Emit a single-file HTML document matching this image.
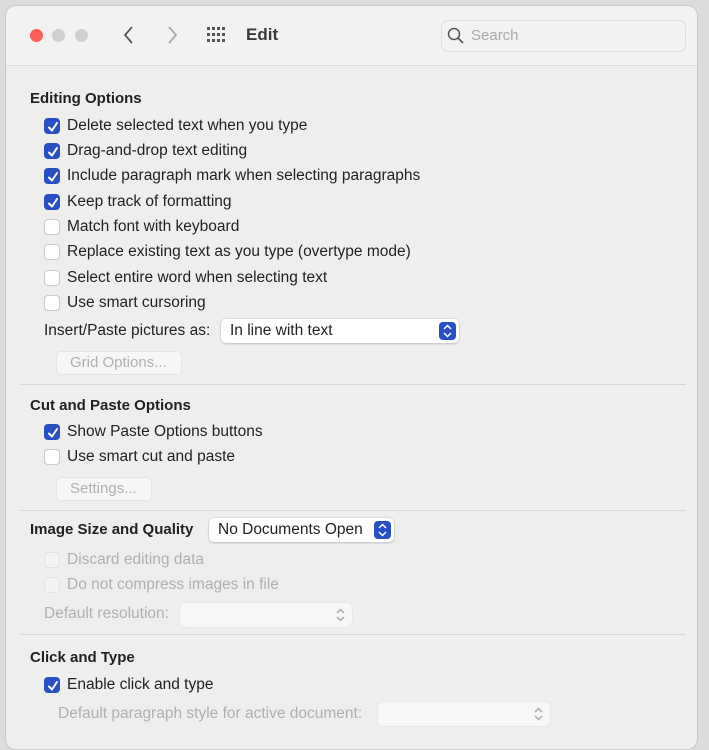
<!DOCTYPE html>
<html><head><meta charset="utf-8"><style>
*{box-sizing:border-box;margin:0;padding:0}
body{width:709px;height:747px;background:#dcdcdc;font-family:"Liberation Sans",sans-serif;position:relative;overflow:hidden;color:#1f1f1f}
.win{position:absolute;left:5px;top:5px;width:693px;height:745px;background:#eeeeec;border-radius:11px;border:1px solid #c8c8c8;overflow:hidden}
.tb{position:absolute;left:0;top:0;right:0;height:60px;background:#f2f2f0;border-bottom:1px solid #dcdcda}
.dot{position:absolute;top:23px;width:13px;height:13px;border-radius:50%}
.a{position:absolute;white-space:nowrap}
.t{font-size:15.5px;color:#222}
.h{font-size:15px;font-weight:bold;color:#222}
.cb{position:absolute;width:16px;height:16px;border-radius:4px;background:#fff;border:1px solid #c9c9c9}
.cb.on{background:#2650c4;border-color:#2650c4}
.cb svg{position:absolute;left:1px;top:1px}
.cb.dis{background:#f2f2f0;border-color:#e2e2e0}
.sep{position:absolute;left:15px;width:665px;height:1px;background:#d6d6d4}
.btn{position:absolute;height:24px;border-radius:5px;background:#f6f6f5;border:1px solid #e3e3e1;color:#b0b0b0;font-size:15px;padding-left:13px;line-height:22px}
.pop{position:absolute;height:24px;border-radius:5px;background:#fff;box-shadow:0 0 0 .5px #ccc,0 1px 2px rgba(0,0,0,.2);font-size:15.5px;line-height:24px;padding-left:9px;color:#222}
.pop .s{position:absolute;right:3px;top:3px;width:17px;height:18px;border-radius:4px;background:#2650c4}
.pop .s svg,.pop .gs{position:absolute;left:3px;top:2px}
.pop.dis{background:#f7f7f6;box-shadow:0 0 0 .5px #e0e0de}
.g{color:#b0b0b0}
</style></head><body>
<svg width="0" height="0" style="position:absolute"><defs><symbol id="ck" viewBox="0 0 14 14"><path d="M3 7.5 L6 10.5 L11 3" stroke="#fff" stroke-width="2" fill="none" stroke-linecap="round" stroke-linejoin="round"/></symbol><symbol id="ud" viewBox="0 0 11 14"><path d="M2 5 L5.5 1.5 L9 5 M2 9 L5.5 12.5 L9 9" stroke="currentColor" stroke-width="1.5" fill="none"/></symbol></defs></svg>
<div class="win">
<div class="tb">
<div class="dot" style="left:24px;background:#fe5f57"></div>
<div class="dot" style="left:46px;background:#d0d0ce"></div>
<div class="dot" style="left:69px;background:#d0d0ce"></div>
<svg class="a" style="left:117px;top:19px" width="12" height="20"><path d="M9 2 L2 10 L9 18" stroke="#555" stroke-width="1.8" fill="none"/></svg>
<svg class="a" style="left:160px;top:19px" width="12" height="20"><path d="M3 2 L10 10 L3 18" stroke="#aaa" stroke-width="1.8" fill="none"/></svg>
<svg class="a" style="left:201px;top:21px" width="20" height="16" fill="#555"><rect x="0" y="0" width="3" height="3"/><rect x="5" y="0" width="3" height="3"/><rect x="10" y="0" width="3" height="3"/><rect x="15" y="0" width="3" height="3"/><rect x="0" y="6" width="3" height="3"/><rect x="5" y="6" width="3" height="3"/><rect x="10" y="6" width="3" height="3"/><rect x="15" y="6" width="3" height="3"/><rect x="0" y="12" width="3" height="3"/><rect x="5" y="12" width="3" height="3"/><rect x="10" y="12" width="3" height="3"/><rect x="15" y="12" width="3" height="3"/></svg>
<div class="a" style="left:240px;top:19px;font-size:17px;font-weight:bold;color:#3a3a3a">Edit</div>
<div class="a" style="left:435px;top:14px;width:245px;height:32px;border:1px solid #dedede;border-radius:7px;background:#f2f2f0"></div>
<svg class="a" style="left:441px;top:21px" width="18" height="18"><circle cx="7" cy="7" r="5.5" stroke="#555" stroke-width="1.5" fill="none"/><path d="M11 11 L16 16" stroke="#555" stroke-width="1.6"/></svg>
<div class="a" style="left:465px;top:21px;font-size:15px;color:#aaa">Search</div>
</div>

<div class="a h" style="left:24px;top:84px">Editing Options</div>
<div class="cb on" style="left:38px;top:112px"><svg width="14" height="14"><use href="#ck"/></svg></div><div class="a t" style="left:61px;top:111px">Delete selected text when you type</div>
<div class="cb on" style="left:38px;top:137px"><svg width="14" height="14"><use href="#ck"/></svg></div><div class="a t" style="left:61px;top:136px">Drag-and-drop text editing</div>
<div class="cb on" style="left:38px;top:162px"><svg width="14" height="14"><use href="#ck"/></svg></div><div class="a t" style="left:61px;top:161px">Include paragraph mark when selecting paragraphs</div>
<div class="cb on" style="left:38px;top:188px"><svg width="14" height="14"><use href="#ck"/></svg></div><div class="a t" style="left:61px;top:187px">Keep track of formatting</div>
<div class="cb" style="left:38px;top:213px"></div><div class="a t" style="left:61px;top:212px">Match font with keyboard</div>
<div class="cb" style="left:38px;top:238px"></div><div class="a t" style="left:61px;top:237px">Replace existing text as you type (overtype mode)</div>
<div class="cb" style="left:38px;top:264px"></div><div class="a t" style="left:61px;top:263px">Select entire word when selecting text</div>
<div class="cb" style="left:38px;top:289px"></div><div class="a t" style="left:61px;top:288px">Use smart cursoring</div>
<div class="a t" style="left:38px;top:316px">Insert/Paste pictures as:</div>
<div class="pop" style="left:215px;top:313px;width:238px">In line with text<div class="s"><svg width="11" height="14" style="color:#fff"><use href="#ud"/></svg></div></div>
<div class="btn" style="left:50px;top:345px;width:126px">Grid Options...</div>
<div class="sep" style="top:378px"></div>

<div class="a h" style="left:24px;top:391px">Cut and Paste Options</div>
<div class="cb on" style="left:38px;top:418px"><svg width="14" height="14"><use href="#ck"/></svg></div><div class="a t" style="left:61px;top:417px">Show Paste Options buttons</div>
<div class="cb" style="left:38px;top:443px"></div><div class="a t" style="left:61px;top:442px">Use smart cut and paste</div>
<div class="btn" style="left:50px;top:471px;width:96px">Settings...</div>
<div class="sep" style="top:504px"></div>

<div class="a h" style="left:24px;top:515px">Image Size and Quality</div>
<div class="pop" style="left:203px;top:512px;width:185px">No Documents Open<div class="s"><svg width="11" height="14" style="color:#fff"><use href="#ud"/></svg></div></div>
<div class="cb dis" style="left:38px;top:546px"></div><div class="a t g" style="left:61px;top:545px">Discard editing data</div>
<div class="cb dis" style="left:38px;top:571px"></div><div class="a t g" style="left:61px;top:570px">Do not compress images in file</div>
<div class="a t g" style="left:38px;top:599px">Default resolution:</div>
<div class="pop dis" style="left:174px;top:597px;width:172px"><svg class="a" style="right:6px;top:5px;color:#aaa" width="11" height="14"><use href="#ud"/></svg></div>
<div class="sep" style="top:628px"></div>

<div class="a h" style="left:24px;top:643px">Click and Type</div>
<div class="cb on" style="left:38px;top:671px"><svg width="14" height="14"><use href="#ck"/></svg></div><div class="a t" style="left:61px;top:670px">Enable click and type</div>
<div class="a t g" style="left:52px;top:699px">Default paragraph style for active document:</div>
<div class="pop dis" style="left:372px;top:696px;width:172px"><svg class="a" style="right:6px;top:5px;color:#aaa" width="11" height="14"><use href="#ud"/></svg></div>
</div>
</body></html>
